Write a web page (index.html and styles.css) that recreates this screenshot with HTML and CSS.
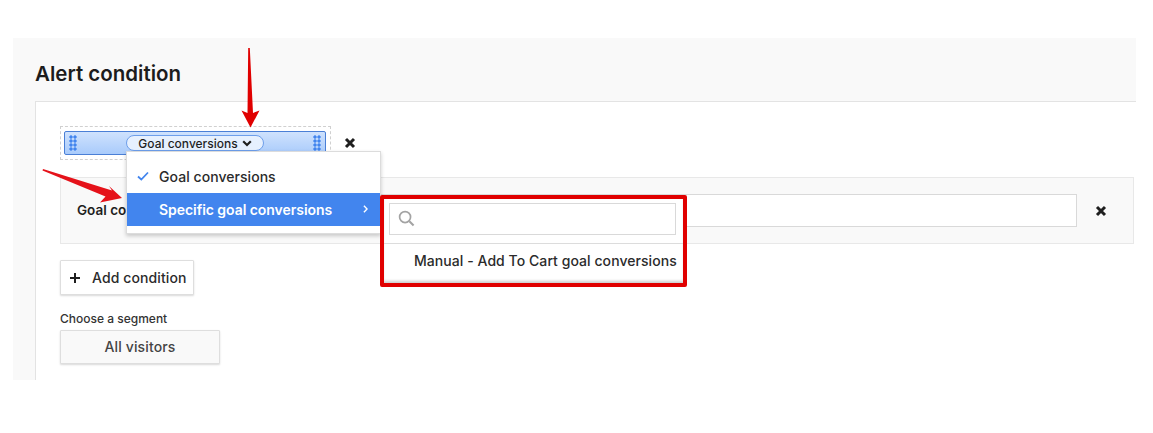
FILE: index.html
```html
<!DOCTYPE html>
<html lang="en">
<head>
    <meta charset="UTF-8">
    <title>Alert condition</title>
    <link rel="stylesheet" href="styles.css">
</head>
<body>
    <div class="panel">
        <h2 class="title">Alert condition</h2>
        <div class="card">
            <!-- Condition selector -->
            <div class="selector-row">
                <div class="selector-dashed">
                    <div class="selector-bar">
                        <span class="grip"></span>
                        <span class="pill">Goal conversions
                            <svg class="pill-chevron" viewBox="0 0 10 7"><path d="M1.200 1.200 5 5l3.800-3.800" fill="none" stroke="#1f1f1f" stroke-width="2.200"/></svg>
                        </span>
                        <span class="grip"></span>
                    </div>
                </div>
                <svg class="remove" viewBox="0 0 12 12"><path d="M2 2l8 8M10 2l-8 8" stroke="#1f1f1f" stroke-width="3"/></svg>
            </div>

            <div class="goal-row">
                <span class="goal-label">Goal conversions</span>
                <div class="goal-input"></div>
                <svg class="remove" viewBox="0 0 12 12"><path d="M2 2l8 8M10 2l-8 8" stroke="#1f1f1f" stroke-width="3"/></svg>
            </div>

            <button class="add-btn">
                <svg class="plus" viewBox="0 0 10 10"><path d="M5 0v10M0 5h10" stroke="#1f1f1f" stroke-width="2"/></svg>
                Add condition
            </button>

            <div class="segment-label">Choose a segment</div>
            <button class="segment-btn">All visitors</button>
        </div>
    </div>

    <!-- Dropdown menus -->
    <div class="menu">
        <div class="menu-item">
            <svg class="check" viewBox="0 0 12 10"><path d="M1 5.500 4.300 8.500 11 1.500" fill="none" stroke="#4285ee" stroke-width="1.800"/></svg>
            Goal conversions
        </div>
        <div class="menu-item active">
            Specific goal conversions
            <svg class="menu-arrow" viewBox="0 0 6 10"><path d="M1 1l4 4-4 4" fill="none" stroke="#fff" stroke-width="1.800"/></svg>
        </div>
    </div>

    <div class="submenu">
        <div class="search-wrap">
            <div class="search">
                <svg class="search-icon" viewBox="0 0 18 18"><circle cx="7.500" cy="7.500" r="5.800" fill="none" stroke="#a3a3a3" stroke-width="1.800"/><path d="M12 12l4.500 4.500" stroke="#a3a3a3" stroke-width="2.200"/></svg>
            </div>
        </div>
        <div class="submenu-item">Manual - Add To Cart goal conversions</div>
    </div>

    <!-- Annotation arrows -->
    <svg class="arrows" viewBox="0 0 1153 433">
        <path d="M248.200 48 249.800 48 253 113 259.500 110.500 250.500 127.500 241.500 110.500 247.500 113Z" fill="#e00000"/>
        <path d="M42.500 170.500 43 169 112 190.500 109 186 122 198 100 202.500 105.500 196.500Z" fill="#e5121a"/>
    </svg>
</body>
</html>
```

FILE: styles.css
```css
/* Base */
body {
    margin: 0;
    padding: 38px 17px 0 13px;
    background-color: #fff;
    color: #1f1f1f;
    font-family: Inter, "Liberation Sans", sans-serif;
}

/* Panel */
.panel {
    height: 342px;
    padding-left: 22px;
    background-color: #f9f9f9;
    display: flex;
    flex-direction: column;
}

.title {
    margin: 0;
    height: 63px;
    box-sizing: border-box;
    padding-top: 24px;
    font-size: 20.500px;
    line-height: 24px;
    font-weight: 600;
    color: #1c1c1c;
}

.card {
    flex-grow: 1;
    padding: 24px 2px 0 24px;
    background-color: #fff;
    border-top: 1px solid #e3e3e3;
    border-left: 1px solid #e3e3e3;
}

/* Condition selector */
.selector-row {
    display: flex;
    align-items: center;
    gap: 13px;
}

.selector-dashed {
    width: 271px;
    height: 34px;
    box-sizing: border-box;
    padding: 4px 3px;
    border: 1px dashed #d0d0d0;
}

.selector-bar {
    width: 262px;
    height: 24px;
    box-sizing: border-box;
    padding: 0 4px;
    display: flex;
    align-items: center;
    justify-content: space-between;
    border: 1px solid #4a7fd6;
    border-radius: 2px;
    background: linear-gradient(#cfe2fd, #a9cbfb);
}

.grip {
    width: 8px;
    height: 16px;
    background-image: radial-gradient(circle, #4285ee 1.500px, transparent 1.700px);
    background-size: 4px 4px;
}

.pill {
    width: 138px;
    height: 16px;
    box-sizing: border-box;
    display: flex;
    align-items: center;
    justify-content: center;
    gap: 4px;
    border: 1px solid #6d9eea;
    border-radius: 9px;
    background-color: #e6f0fe;
    font-size: 12px;
    font-weight: 500;
}

.pill-chevron {
    width: 10px;
    height: 7px;
}

.remove {
    width: 12px;
    height: 12px;
    flex-shrink: 0;
}

/* Goal row */
.goal-row {
    margin-top: 17px;
    height: 67px;
    box-sizing: border-box;
    padding-left: 16px;
    display: flex;
    align-items: center;
    background-color: #f9f9f9;
    border: 1px solid #e8e8e8;
}

.goal-label {
    width: 301px;
    flex-shrink: 0;
    padding-bottom: 2px;
    font-size: 13.500px;
    font-weight: 600;
}

.goal-input {
    width: 699px;
    height: 33px;
    box-sizing: border-box;
    margin-right: 18px;
    background-color: #fff;
    border: 1px solid #d9d9d9;
}

/* Buttons */
.add-btn {
    display: flex;
    align-items: center;
    gap: 12px;
    margin-top: 16px;
    width: 134px;
    height: 35px;
    padding: 0 0 0 9px;
    background-color: #fff;
    border: 1px solid #dedede;
    border-radius: 1px;
    box-shadow: 0 1px 2px rgba(0, 0, 0, 0.15);
    font-family: inherit;
    font-size: 14px;
    font-weight: 500;
    letter-spacing: 0.1px;
    color: #2b2b2b;
}

.plus {
    width: 10px;
    height: 10px;
}

.segment-label {
    margin-top: 16px;
    font-size: 12px;
    line-height: 16px;
    font-weight: 500;
    color: #333;
}

.segment-btn {
    display: block;
    margin-top: 3px;
    width: 160px;
    height: 34px;
    padding: 0 0 1px;
    background-color: #f9f9f9;
    border: 1px solid #dedede;
    border-radius: 1px;
    box-shadow: 0 1px 2px rgba(0, 0, 0, 0.15);
    font-family: inherit;
    font-size: 14px;
    font-weight: 500;
    letter-spacing: 0.12px;
    color: #444;
}

/* Dropdown */
.menu {
    position: absolute;
    left: 126px;
    top: 151px;
    width: 255px;
    height: 83px;
    box-sizing: border-box;
    padding-top: 8px;
    background-color: #fff;
    border: 1px solid #dcdcdc;
    box-shadow: 0 2px 4px rgba(0, 0, 0, 0.2);
}

.menu-item {
    position: relative;
    height: 33px;
    padding-left: 32px;
    font-size: 14px;
    font-weight: 500;
    line-height: 33px;
    letter-spacing: 0.05px;
    color: #2b2b2b;
}

.menu-item.active {
    color: #fff;
    font-weight: 600;
    letter-spacing: -0.05px;
    background-color: #4285ee;
}

.check {
    position: absolute;
    left: 10px;
    top: 11px;
    width: 12px;
    height: 10px;
}

.menu-arrow {
    position: absolute;
    right: 12px;
    top: 12px;
    width: 5px;
    height: 8px;
}

.submenu {
    position: absolute;
    left: 380px;
    top: 195px;
    width: 307px;
    height: 92px;
    box-sizing: border-box;
    background-color: #fff;
    border: 4px solid #e00000;
    border-radius: 2px;
    box-shadow: inset 0 -3px 3px -1px rgba(0, 0, 0, 0.2);
}

.search-wrap {
    height: 45px;
    box-sizing: border-box;
    padding: 4px 0 0 5px;
    border-bottom: 1px solid #dcdcdc;
}

.search {
    width: 287px;
    height: 32px;
    box-sizing: border-box;
    padding: 6px 0 0 8px;
    border: 1px solid #d9d9d9;
}

.search-icon {
    display: block;
    width: 17px;
    height: 17px;
}

.submenu-item {
    padding: 3px 0 0 30px;
    font-size: 14px;
    font-weight: 500;
    line-height: 28px;
    letter-spacing: 0.06px;
    white-space: nowrap;
    color: #2b2b2b;
}

/* Arrows over the screenshot */
.arrows {
    position: absolute;
    left: 0;
    top: 0;
    width: 1153px;
    height: 433px;
    pointer-events: none;
}
```
